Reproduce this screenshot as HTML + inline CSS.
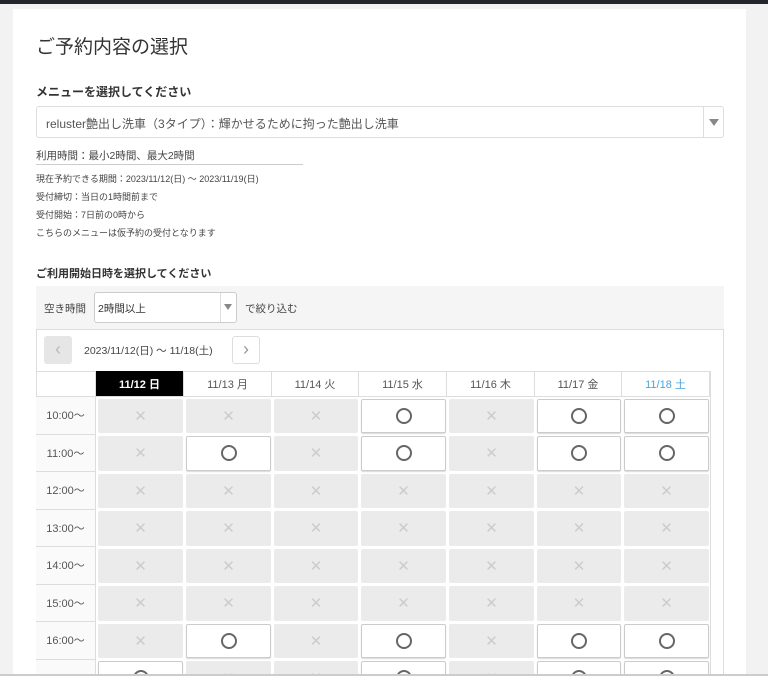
<!DOCTYPE html>
<html style="width:768px;height:676px;overflow:hidden"><head><meta charset="utf-8"><style>
*{box-sizing:border-box;margin:0;padding:0}
body{width:768px;height:676px;overflow:hidden;background:#f2f2f2;font-family:"Liberation Sans","Noto Sans CJK JP",sans-serif;color:#333;position:relative}
.top{position:absolute;left:0;top:0;width:768px;height:4px;background:#23272b}
.panel{position:absolute;left:13px;top:9px;width:733px;height:667px;background:#fff}
.a{position:absolute}
h1{position:absolute;left:36px;top:32px;font-size:19px;font-weight:normal;color:#333}
.lbl{font-size:12px;font-weight:bold;color:#333}
.sel{left:36px;top:106px;width:688px;height:32px;border:1px solid #ddd;border-radius:3px;font-size:12px;color:#555;padding:8px 9px}
.sel .arr{position:absolute;right:0;top:0;width:20px;height:30px;border-left:1px solid #ddd}
.tri{position:absolute;width:0;height:0;border-left:5px solid transparent;border-right:5px solid transparent;border-top:7px solid #888}
.small{font-size:9px;color:#444}
.filter{left:36px;top:286px;width:688px;height:44px;background:#f5f5f5}
.grid{left:36px;top:329px;width:688px;height:360px;border:1px solid #ddd}
.cell{position:absolute;background:#ebebeb;border-radius:2px;display:flex;align-items:center;justify-content:center;color:#ccc;font-size:15px}
.cell.o{background:#fff;border:1px solid #ccc;box-shadow:0 1px 1px rgba(0,0,0,.15)}
.circ{width:16px;height:16px;border:2.5px solid #666;border-radius:50%}
.hd{position:absolute;top:371px;height:26px;font-size:11px;color:#555;display:flex;align-items:center;justify-content:center;border-right:1px solid #ddd;border-bottom:1px solid #ddd}
.tm{position:absolute;left:36px;width:60px;font-size:11px;color:#555;display:flex;align-items:center;justify-content:center;border-bottom:1px solid #ddd;border-right:1px solid #ddd;background:#fafafa}
</style></head><body>
<div class="top"></div>
<div class="panel"></div>
<h1>ご予約内容の選択</h1>
<div class="a lbl" style="left:36px;top:83px">メニューを選択してください</div>
<div class="a sel">reluster艶出し洗車（3タイプ）：輝かせるために拘った艶出し洗車<div class="arr"><div class="tri" style="left:5px;top:12px"></div></div></div>
<div class="a" style="left:36px;top:148px;font-size:10.5px;color:#444">利用時間：最小2時間、最大2時間</div>
<div class="a" style="left:36px;top:164px;width:267px;border-top:1px solid #ccc"></div>
<div class="a small" style="left:36px;top:172px">現在予約できる期間：2023/11/12(日) ～ 2023/11/19(日)</div>
<div class="a small" style="left:36px;top:190px">受付締切：当日の1時間前まで</div>
<div class="a small" style="left:36px;top:208px">受付開始：7日前の0時から</div>
<div class="a small" style="left:36px;top:226px">こちらのメニューは仮予約の受付となります</div>
<div class="a lbl" style="left:36px;top:265px;font-size:11px">ご利用開始日時を選択してください</div>
<div class="a filter"></div>
<div class="a" style="left:44px;top:301px;font-size:10.5px;color:#444">空き時間</div>
<div class="a" style="left:94px;top:292px;width:143px;height:31px;background:#fff;border:1px solid #ccc;border-radius:3px;font-size:10.5px;color:#333;padding:8px 3px">2時間以上<div class="a" style="right:0;top:0;width:16px;height:29px;border-left:1px solid #ddd"><div class="tri" style="left:3px;top:11px;border-left-width:4px;border-right-width:4px;border-top-width:6px"></div></div></div>
<div class="a" style="left:245px;top:301px;font-size:10.5px;color:#444">で絞り込む</div>
<div class="a grid"></div>
<div class="a" style="left:44px;top:336px;width:28px;height:28px;background:#e6e6e6;border-radius:3px;color:#bbb;font-size:18px;text-align:center;line-height:27px">&#x2039;</div>
<div class="a" style="left:84px;top:343px;font-size:10.5px;color:#444">2023/11/12(日) ～ 11/18(土)</div>
<div class="a" style="left:232px;top:336px;width:28px;height:28px;border:1px solid #ddd;border-radius:3px;color:#999;font-size:18px;text-align:center;line-height:25px">&#x203A;</div>
<div class="a" style="left:36px;top:371px;width:675px;border-top:1px solid #ddd"></div>
<div class="a" style="left:710px;top:371px;height:320px;border-left:1px solid #ddd"></div>
<div id="g"></div>
<script>
var xs=[96,184,272,359,447,535,622,710];
var days=["11/12 日","11/13 月","11/14 火","11/15 水","11/16 木","11/17 金","11/18 土"];
var av={0:[3,5,6],1:[1,3,5,6],6:[1,3,5,6],7:[0,3,5,6]};
var h='<div class="hd" style="left:36px;width:60px"></div>';
for(var i=0;i<7;i++){var st=i==0?'background:#000;color:#fff;font-weight:bold':(i==6?'color:#4aa3df':'');h+='<div class="hd" style="left:'+xs[i]+'px;width:'+(xs[i+1]-xs[i])+'px;'+st+'">'+days[i]+'</div>';}
for(var r=0;r<8;r++){var y=397+r*37.5;h+='<div class="tm" style="top:'+y+'px;height:37.5px">'+(10+r)+':00～</div>';
for(var i=0;i<7;i++){var o=av[r]&&av[r].indexOf(i)>=0;h+='<div class="cell'+(o?' o':'')+'" style="left:'+(xs[i]+2)+'px;top:'+(y+1.5)+'px;width:'+(xs[i+1]-xs[i]-3)+'px;height:34.5px">'+(o?'<div class="circ"></div>':'✕')+'</div>';}}
document.getElementById('g').innerHTML=h;
</script>
<div class="a" style="left:0;top:674px;width:768px;height:2px;background:#ccc;z-index:5"></div>
</body></html>
